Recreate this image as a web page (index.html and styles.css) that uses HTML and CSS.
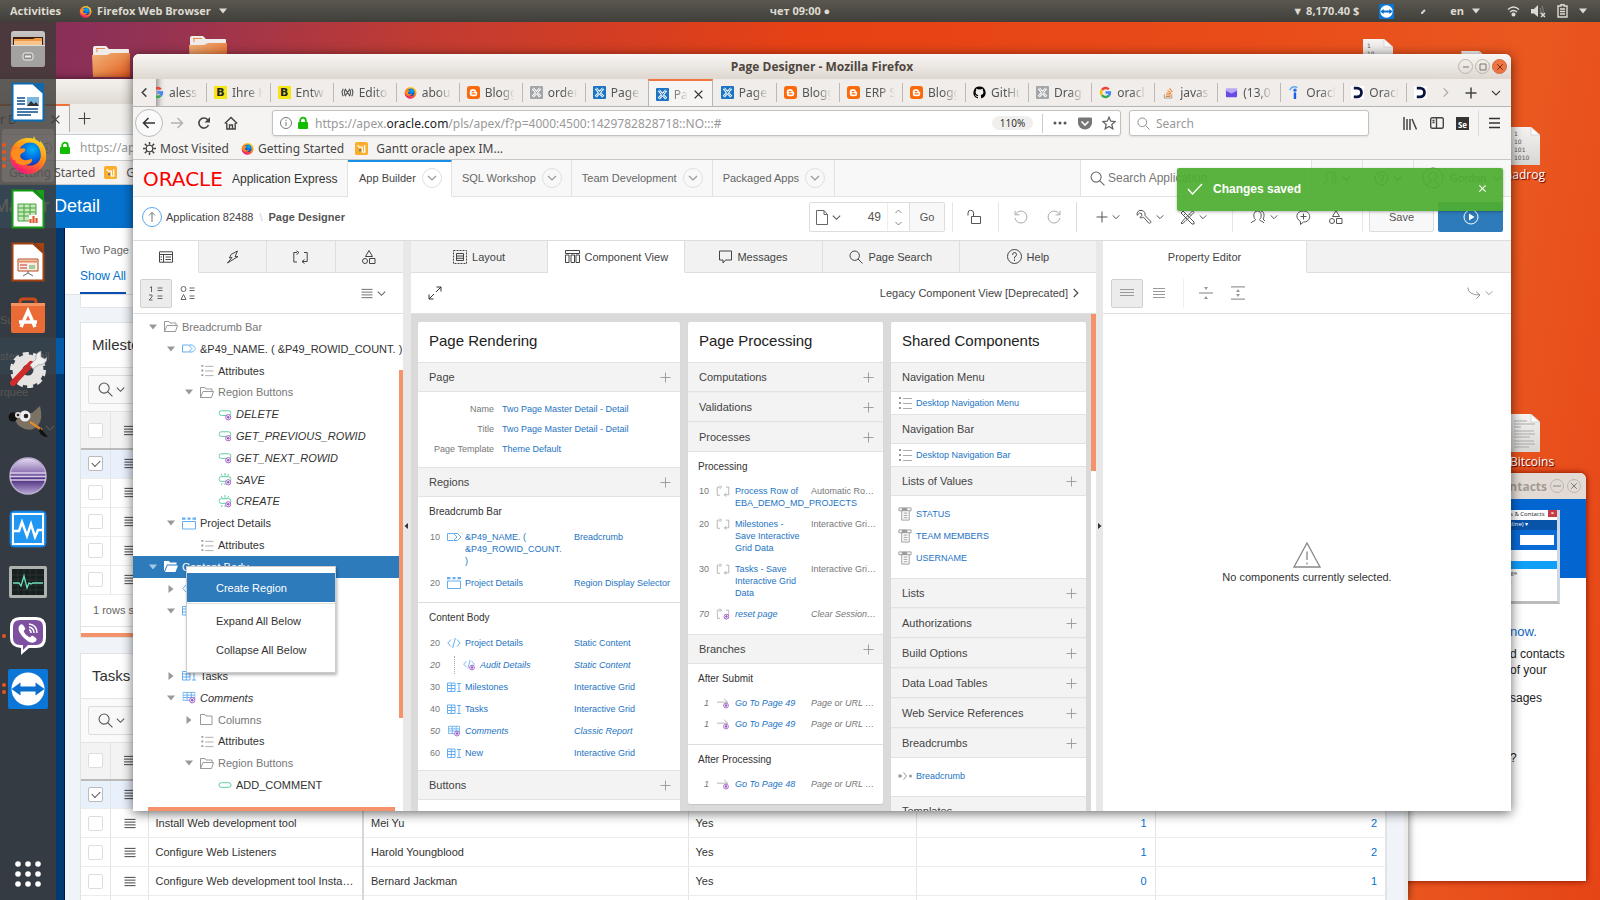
FILE: index.html
```html
<!DOCTYPE html>
<html lang="en">
<head>
<meta charset="utf-8">
<title>Page Designer - Mozilla Firefox</title>
<link rel="stylesheet" href="styles.css">
</head>
<body>
<svg class="defs" aria-hidden="true">
  <defs>
    <linearGradient id="gFire" x1="0.8" y1="0" x2="0.2" y2="1"><stop offset="0" stop-color="#ffe226"/><stop offset=".45" stop-color="#ff8a16"/><stop offset=".8" stop-color="#ff3750"/><stop offset="1" stop-color="#e31587"/></linearGradient>
    <radialGradient id="gGlobe" cx=".6" cy=".3" r=".8"><stop offset="0" stop-color="#00b3f4"/><stop offset=".6" stop-color="#0060df"/><stop offset="1" stop-color="#3a1b8f"/></radialGradient>
    <linearGradient id="gFolder" x1="0" y1="0" x2="1" y2="1"><stop offset="0" stop-color="#f0b27c"/><stop offset=".5" stop-color="#ea8a4c"/><stop offset="1" stop-color="#e0561d"/></linearGradient>
    <linearGradient id="gMetal" x1="0" y1="0" x2="0" y2="1"><stop offset="0" stop-color="#c9c8c6"/><stop offset="1" stop-color="#8b8a88"/></linearGradient>
    <linearGradient id="gPaper" x1="0" y1="0" x2="0" y2="1"><stop offset="0" stop-color="#f4f3f1"/><stop offset="1" stop-color="#d8d6d3"/></linearGradient>
    <linearGradient id="gEcl" x1="0" y1="0" x2="0" y2="1"><stop offset="0" stop-color="#e6dcf2"/><stop offset=".4" stop-color="#8e74b4"/><stop offset=".6" stop-color="#4b2f7c"/><stop offset="1" stop-color="#b9a6d8"/></linearGradient>
  </defs>
  <symbol id="firefox" viewBox="0 0 40 40"><circle cx="20" cy="21" r="18" fill="url(#gFire)"/><circle cx="22" cy="19" r="11.500" fill="url(#gGlobe)"/><path d="M3 17c2-3 5-4 8-3 2-1 5-1 6 0 1 3-2 3-4 5s0 5 3 6 5-1 8-1c1 3-3 6-8 6-8 0-13-6-13-13z" fill="#ff8d1c"/><path d="M26 1c-2 4 1 6 4 10s4 12 1 17-9 7-14 6-9-4-10-9L3 25c1 7 9 13 17 13s16-6 18-14c1-8-2-15-6-18 0 2 0 3 1 5-3-3-6-6-7-10z" fill="url(#gFire)"/></symbol>
  <symbol id="tv" viewBox="0 0 40 40"><rect width="40" height="40" rx="2" fill="#0a76d8"/><circle cx="20" cy="20" r="16.500" fill="#fff"/><path d="M3.500 20l9-6.500v4h15v-4l9 6.500-9 6.500v-4h-15v4z" fill="#0b6fd0"/></symbol>
  <symbol id="folderbig" viewBox="0 0 38 31"><path d="M1 2q0-2 2-2h11l3 3h19q1 0 1 1v7H1z" fill="#efecea"/><path d="M4 2.500h9M5 3v3" stroke="#e58a4d" fill="none"/><path d="M0 9h15l4-2h19v24H1z" fill="url(#gFolder)"/></symbol>
  <symbol id="file" viewBox="0 0 30 38"><path d="M0 0h21l9 8v30H0z" fill="url(#gPaper)"/><path d="M21 0v8h9z" fill="#fbfbfa" stroke="#bbb" stroke-width=".5"/></symbol>
  <symbol id="blogger" viewBox="0 0 14 14"><rect width="14" height="14" rx="3" fill="#fb6a0a"/><path d="M5.500 3.500h2a2 2 0 0 1 2 2c0 1 1.500.5 1.500 1.500v1.500a2.500 2.500 0 0 1-2.500 2.500h-3A2.500 2.500 0 0 1 3 8.500V6a2.500 2.500 0 0 1 2.500-2.500z" fill="#fff"/><path d="M5.500 6h2M5.500 8.500h3.200" stroke="#fb6a0a" stroke-width="1.200" stroke-linecap="round"/></symbol>
  <symbol id="xb" viewBox="0 0 14 14"><rect width="14" height="14" rx="1" fill="currentColor"/><path d="M3 2.500l8 9M11 2.500l-8 9" stroke="#fff" stroke-width="3"/><path d="M3 2.500l8 9M11 2.500l-8 9" stroke="currentColor" stroke-width="1.200" stroke-dasharray="1.200 .8"/></symbol>
  <symbol id="goog" viewBox="0 0 14 14" fill="none" stroke-width="2.600"><path d="M3.200 4.200A4.800 4.800 0 0 1 10.600 3.500" stroke="#ea4335"/><path d="M3.200 4.200a4.800 4.800 0 0 0 0 5.600" stroke="#fbbc05"/><path d="M3.200 9.800a4.800 4.800 0 0 0 7.300.6" stroke="#34a853"/><path d="M7 7h4.800a4.800 4.800 0 0 1-1.300 3.400" stroke="#4285f4"/></symbol>
  <symbol id="github" viewBox="0 0 16 16"><path d="M8 .6a7.500 7.500 0 0 0-2.400 14.600c.4.100.5-.2.500-.4v-1.400c-2.100.4-2.600-1-2.600-1-.3-.9-.8-1.100-.8-1.100-.7-.5 0-.5 0-.5.800.1 1.200.8 1.200.8.700 1.200 1.800.9 2.200.7 0-.5.300-.9.500-1-1.700-.3-3.400-.9-3.400-3.800 0-.8.300-1.500.8-2-.1-.3-.4-1 0-2 0 0 .6-.2 2.100.8a7 7 0 0 1 3.800 0c1.500-1 2.100-.8 2.100-.8.400 1 .1 1.700 0 2 .5.500.8 1.200.8 2 0 2.900-1.700 3.500-3.400 3.700.3.300.5.700.5 1.400v2.200c0 .2.100.5.500.4A7.500 7.500 0 0 0 8 .6z" fill="#000"/></symbol>
  <symbol id="stack" viewBox="0 0 14 14" fill="none"><path d="M2.500 9v4h8V9" stroke="#999"/><path d="M4 11.300h5M4.200 9.300l5 .6M4.800 7.200l4.700 1.500M6 4.700l4 3M8.200 2.500l3 4" stroke="#f48024" stroke-width="1.100"/></symbol>
  <symbol id="mail" viewBox="0 0 14 14"><path d="M1 3h12v8q0 1-1 1H2q-1 0-1-1z" fill="#6a4be8"/><path d="M1 3h12v2L7 8 1 5z" fill="#b9a8f7"/></symbol>
  <symbol id="person" viewBox="0 0 14 14"><circle cx="7.500" cy="4.500" r="1.800" fill="#1a73e8"/><path d="M2 4.500a5 5 0 0 1 8-2.500" stroke="#6aa5f0" stroke-width="1.600" fill="none"/><path d="M7.500 7v7" stroke="#1a5fe8" stroke-width="2.600" fill="none"/></symbol>
  <symbol id="dlogo" viewBox="0 0 14 14"><rect width="14" height="14" fill="#fff"/><path d="M3 2.200h3.500a4.700 4.700 0 0 1 0 9.600H3" fill="none" stroke="#0a1440" stroke-width="3"/></symbol>
  <symbol id="gantt" viewBox="0 0 14 14"><rect width="14" height="14" rx="2" fill="#fbad2c"/><path d="M3 3.500l1.500 2H8V11h2.500V3.500" fill="none" stroke="#fff" stroke-width="1.400"/><path d="M4.500 8h2v2h-2z" fill="#3a6ea5"/></symbol>
  <symbol id="ed" viewBox="0 0 14 14" fill="none" stroke="#555" stroke-width="1.200"><path d="M2.500 3Q0 7 2.500 11M5 3Q2.500 7 5 11M9 3q2.500 4 0 8M11.500 3q2.500 4 0 8M5 4l4 6M9 4l-4 6"/></symbol>
  <symbol id="chev" viewBox="0 0 12 12"><path d="M2 4l4 4 4-4" fill="none" stroke="currentColor" stroke-width="1.200"/></symbol>
  <symbol id="chevr" viewBox="0 0 12 12"><path d="M4 1.500L8.500 6 4 10.500" fill="none" stroke="currentColor" stroke-width="1.300"/></symbol>
  <symbol id="chevl" viewBox="0 0 12 12"><path d="M8 1.500L3.500 6 8 10.500" fill="none" stroke="currentColor" stroke-width="1.600"/></symbol>
  <symbol id="tri" viewBox="0 0 8 8"><path d="M0 1.500h8L4 6.500z" fill="currentColor"/></symbol>
  <symbol id="trir" viewBox="0 0 8 8"><path d="M1.500 0v8l5-4z" fill="currentColor"/></symbol>
  <symbol id="x" viewBox="0 0 10 10"><path d="M1.500 1.500l7 7M8.500 1.500l-7 7" stroke="currentColor" stroke-width="1.200"/></symbol>
  <symbol id="plus" viewBox="0 0 12 12"><path d="M6 .5v11M.5 6h11" stroke="currentColor" stroke-width="1"/></symbol>
  <symbol id="lock" viewBox="0 0 12 14"><path d="M3.200 6V4.500a2.800 2.800 0 0 1 5.600 0V6" fill="none" stroke="#12bc00" stroke-width="1.800"/><rect x="1" y="6" width="10" height="7" rx="1" fill="#12bc00"/></symbol>
  <symbol id="info" viewBox="0 0 14 14" fill="none" stroke="#777"><circle cx="7" cy="7" r="5.500"/><path d="M7 6v4M7 3.800v1.200"/></symbol>
  <symbol id="search" viewBox="0 0 14 14" fill="none" stroke="currentColor"><circle cx="5.700" cy="5.700" r="4.700"/><path d="M9 9l4.500 4.500"/></symbol>
  <symbol id="lines" viewBox="0 0 12 12"><path d="M0 1.500h12M0 4.500h12M0 7.500h12M0 10.500h12" stroke="currentColor"/></symbol>
  <symbol id="folder" viewBox="0 0 14 12" fill="none" stroke="currentColor"><path d="M.5 11V1h4.500l1 1.500h6V11z"/></symbol>
  <symbol id="ofolder" viewBox="0 0 14 12" fill="none" stroke="currentColor"><path d="M.5 11V1h4.500l1 1.500h6v2.500M.5 11L3 5h10.500L11.500 11z"/></symbol>
  <symbol id="wfolder" viewBox="0 0 14 12" fill="currentColor"><path d="M0 11V.5h5l1 1.500h6.500v2H3z"/><path d="M3.500 5H14l-2.500 6.500H1z"/></symbol>
  <symbol id="attrs" viewBox="0 0 14 14"><path d="M1 2h2M1 7h2M1 12h2" stroke="#999" stroke-width="2"/><path d="M5 2.500h9M5 7.500h9M5 12.500h9" stroke="#aaa"/></symbol>
  <symbol id="crumb" viewBox="0 0 14 10" fill="none" stroke="#64aef0"><path d="M.5 1.500h6L10 5 6.500 8.500h-6z M7 1.500h3.500L14 5l-3.500 3.500H7"/></symbol>
  <symbol id="btn" viewBox="0 0 14 14" fill="none"><rect x=".5" y="4" width="13" height="5" rx="2.500" stroke="#52c99a"/></symbol>
  <symbol id="badge" viewBox="0 0 14 14" fill="none"><circle cx="10.500" cy="10" r="2.800" fill="#fff" stroke="#9b59c0"/><circle cx="10.500" cy="10" r="1.400" fill="#9b59c0"/></symbol>
  <symbol id="btnb" viewBox="0 0 14 14"><use href="#btn" width="14" height="14" y="-1"/><use href="#badge" width="14" height="14"/></symbol>
  <symbol id="btns" viewBox="0 0 14 14"><path d="M7 0v3M3 1l1 2M11 1l-1 2M3 13l1-2M7 13v-2" stroke="#52c99a"/><use href="#btn" width="14" height="14"/><use href="#badge" width="14" height="14"/></symbol>
  <symbol id="region" viewBox="0 0 14 12" fill="none" stroke="#64aef0"><path d="M.5 4h13v7.500H.5z"/><path d="M0 1.200h3.500M5.500 1.200H8.500M10.500 1.200H14" stroke-width="2.200"/></symbol>
  <symbol id="code" viewBox="0 0 14 12" fill="none" stroke="#64aef0"><path d="M4 2.500L.8 6 4 9.500M10 2.500L13.200 6 10 9.500M8.300 1L5.700 11"/></symbol>
  <symbol id="codeb" viewBox="0 0 14 14"><use href="#code" width="14" height="12"/><use href="#badge" width="14" height="14"/></symbol>
  <symbol id="grid" viewBox="0 0 14 12" fill="none" stroke="#64aef0"><path d="M.5 2h7.500v8.500H.5zM.5 4.500H8M.5 7.500H8M4.300 2v8.500M10 2.500h4M10 10.500h4M12 2.500v8"/></symbol>
  <symbol id="rep" viewBox="0 0 14 12" fill="none" stroke="#64aef0"><path d="M.5 1.500h13V10H.5zM.5 4.500h13M.5 7h13M5 1.500V10M9.500 1.500V10"/></symbol>
  <symbol id="repb" viewBox="0 0 14 14"><use href="#rep" width="14" height="12"/><use href="#badge" width="14" height="14"/></symbol>
  <symbol id="proc" viewBox="0 0 15 14" fill="none" stroke="currentColor"><path d="M4 2.500H.8V12H4M3.500.8L6 2.500 3.500 4.500M11 2.500h3.200V11.500H9M11.500 9.500L9 11.500l2.500 2"/></symbol>
  <symbol id="procb" viewBox="0 0 15 14"><use href="#proc" width="15" height="14"/><use href="#badge" width="14" height="14" x="1"/></symbol>
  <symbol id="branch" viewBox="0 0 14 14"><path d="M0 6h12M8 2l4.500 4L8 9.500" fill="none" stroke="#aaa"/><use href="#badge" width="14" height="14"/></symbol>
  <symbol id="lov" viewBox="0 0 14 15" fill="none" stroke="#999"><path d="M.5 1h13v3H.5zM3.500 4v10h8V4M5.500 6.500h4M5.500 9h4M5.500 11.500h4"/><path d="M4 1.500h5v2H4z" fill="#999"/></symbol>
  <symbol id="dots" viewBox="0 0 14 10"><circle cx="2" cy="5" r="1.800" fill="#999"/><circle cx="12.500" cy="5" r="1.500" fill="#999"/><path d="M5.500 1.500L8.500 5l-3 3.500" fill="none" stroke="#999"/></symbol>
  <symbol id="shapes" viewBox="0 0 16 16" fill="none" stroke="currentColor"><path d="M8 1.500l3.500 6h-7zM8.500 9.500H14v5H8.500z"/><circle cx="4" cy="12" r="2.500"/></symbol>
  <symbol id="user" viewBox="0 0 16 16" fill="none" stroke="currentColor"><path d="M5.500 10.500C3 9 3 2 7.500 2S12 9 9.500 10.500c0 2 4 1.500 4.500 3.500M5.500 10.500c0 2-4 1.500-4.500 3.500M11 2.200c3-.5 4 5 2 7.800l2 2"/></symbol>
  <symbol id="tree" viewBox="0 0 14 12" fill="none" stroke="currentColor"><path d="M.5.800h13v10.400H.5zM.5 3.500h13M4.500 3.500v7.700M6.500 6H12M6.500 8.500H12M1.500 6H3M1.500 8.500H3"/></symbol>
  <symbol id="bolt" viewBox="0 0 14 14" fill="none" stroke="currentColor"><path d="M11.500 1L5 4.500 3.500 8l2.500-.5L1.500 13 12 6.500l-3 .3z"/></symbol>
</svg>

<div class="desktop">
  <div class="pin folder1"><svg width="38" height="31"><use href="#folderbig"/></svg></div>
  <div class="pin folder2"><svg width="38" height="31"><use href="#folderbig"/></svg></div>
  <div class="pin file1"><svg width="30" height="38"><use href="#file"/></svg><span class="bits">1<br>10</span></div>
  <div class="pin file2"><svg width="26" height="32"><use href="#file"/></svg></div>
  <div class="pin file3"><svg width="30" height="38"><use href="#file"/></svg><span class="bits">1<br>10<br>101<br>1010</span><span class="lbl">nadrog</span></div>
  <div class="pin file4"><svg width="30" height="38" viewBox="0 0 30 38"><use href="#file"/><path d="M4 7h13M4 10h21M4 13h7M4 17h20M4 20h21M4 23h16M4 27h20M4 30h21M4 33h15" stroke="#aaa"/></svg><span class="lbl">Bitcoins</span></div>

  <section class="teamwin">
    <header><span>ontacts</span><i><svg width="8" height="8" viewBox="0 0 8 8"><path d="M0 4h8" stroke="#888"/></svg></i><i><svg width="8" height="8"><use href="#x"/></svg></i></header>
    <div class="team-hero">
      <div class="team-shot">
        <div class="ts-title">ters &amp; Contacts<b>×</b></div>
        <div class="ts-bar">nline) ▾<em></em></div>
        <div class="ts-find"><span></span></div>
        <div class="ts-sel"></div>
        <p>rge</p><p>a</p><p>r</p>
      </div>
    </div>
    <div class="team-copy"><p class="now">now.</p><p>d contacts<br>of your</p><p>sages</p><p class="q">?</p></div>
  </section>

  <section class="backwin">
    <div class="bw-title"></div>
    <div class="bw-tabs"><span class="bw-tab">r D<svg width="11" height="11"><use href="#x"/></svg></span><svg width="13" height="13"><use href="#plus"/></svg></div>
    <div class="bw-url"><svg width="12" height="12"><use href="#info"/></svg><svg width="12" height="14"><use href="#lock"/></svg><span>https://apex.oracle.com</span></div>
    <div class="bw-marks"><span>Getting Started</span><svg width="13" height="13"><use href="#gantt"/></svg><span>Gantt oracle</span></div>
    <div class="bw-head">Master Detail</div>
    <div class="bw-body">
      <nav class="bw-side"><a href="#">Su</a><a href="#" class="on">ster Detail</a><a href="#">rquee</a><a href="#" class="ch"><svg width="12" height="12"><use href="#chev"/></svg></a></nav>
      <div class="bw-main">
        <div class="bw-crumb"><span>Two Page</span><a href="#">Show All</a></div>
        <div class="bw-strip"></div>
        <div class="ig">
          <h2>Milestones</h2>
          <div class="ig-tools"><button class="ig-find" aria-label="Search milestones"><svg width="15" height="15"><use href="#search"/></svg><svg width="11" height="11"><use href="#chev"/></svg></button></div>
          <table>
            <tr class="hd"><th><input type="checkbox" aria-label="All"></th><th><svg width="11" height="11"><use href="#lines"/></svg></th><th></th></tr>
            <tr class="sel"><td><input type="checkbox" checked aria-label="Row 1"></td><td><svg width="12" height="11"><use href="#lines"/></svg></td><td></td></tr>
            <tr><td><input type="checkbox" aria-label="Row 2"></td><td><svg width="12" height="11"><use href="#lines"/></svg></td><td></td></tr>
            <tr><td><input type="checkbox" aria-label="Row 3"></td><td><svg width="12" height="11"><use href="#lines"/></svg></td><td></td></tr>
            <tr><td><input type="checkbox" aria-label="Row 4"></td><td><svg width="12" height="11"><use href="#lines"/></svg></td><td></td></tr>
            <tr><td><input type="checkbox" aria-label="Row 5"></td><td><svg width="12" height="11"><use href="#lines"/></svg></td><td></td></tr>
          </table>
          <div class="ig-foot">1 rows selected</div>
          <div class="ig-bar"></div>
        </div>
        <div class="ig second">
          <h2>Tasks</h2>
          <div class="ig-tools"><button class="ig-find" aria-label="Search tasks"><svg width="15" height="15"><use href="#search"/></svg><svg width="11" height="11"><use href="#chev"/></svg></button></div>
          <table>
            <tr class="hd"><th><input type="checkbox" aria-label="All"></th><th><svg width="11" height="11"><use href="#lines"/></svg></th><th class="c3"></th><th class="c4"></th><th class="c5"></th><th class="c6"></th><th class="c7"></th></tr>
            <tr class="sel"><td><input type="checkbox" checked aria-label="Task 1"></td><td><svg width="12" height="11"><use href="#lines"/></svg></td><td></td><td></td><td></td><td></td><td></td></tr>
            <tr><td><input type="checkbox" aria-label="Task 2"></td><td><svg width="12" height="11"><use href="#lines"/></svg></td><td>Install Web development tool</td><td>Mei Yu</td><td>Yes</td><td class="n">1</td><td class="n">2</td></tr>
            <tr><td><input type="checkbox" aria-label="Task 3"></td><td><svg width="12" height="11"><use href="#lines"/></svg></td><td>Configure Web Listeners</td><td>Harold Youngblood</td><td>Yes</td><td class="n">1</td><td class="n">2</td></tr>
            <tr><td><input type="checkbox" aria-label="Task 4"></td><td><svg width="12" height="11"><use href="#lines"/></svg></td><td>Configure Web development tool Insta…</td><td>Bernard Jackman</td><td>Yes</td><td class="n">0</td><td class="n">1</td></tr>
            <tr><td></td><td></td><td></td><td></td><td></td><td></td><td></td></tr>
          </table>
        </div>
      </div>
    </div>
  </section>

  <section class="mainwin">
    <header class="titlebar"><h1>Page Designer - Mozilla Firefox</h1>
      <div class="wbtns"><button aria-label="Minimize"><svg width="8" height="8" viewBox="0 0 8 8"><path d="M1 4h6" stroke="currentColor"/></svg></button><button aria-label="Maximize"><svg width="8" height="8" viewBox="0 0 8 8"><path d="M1 1h6v6H1z" fill="none" stroke="currentColor"/></svg></button><button class="close" aria-label="Close"><svg width="8" height="8"><use href="#x"/></svg></button></div></header>
    <div class="tabbar">
      <button class="tscroll" aria-label="Scroll left"><svg width="11" height="11"><use href="#chevl"/></svg></button>
      <div class="tabs">
        <a href="#"><svg><use href="#goog"/></svg><span>aless</span></a>
        <a href="#"><b class="fb">B</b><span>Ihre K</span></a>
        <a href="#"><b class="fb">B</b><span>Entw</span></a>
        <a href="#"><svg><use href="#ed"/></svg><span>Edito</span></a>
        <a href="#"><svg><use href="#firefox"/></svg><span>abou</span></a>
        <a href="#"><svg><use href="#blogger"/></svg><span>Blogg</span></a>
        <a href="#"><svg class="gr"><use href="#xb"/></svg><span>order</span></a>
        <a href="#"><svg class="bl"><use href="#xb"/></svg><span>Page</span></a>
        <a href="#" class="on"><svg class="bl"><use href="#xb"/></svg><span>Pa</span><svg class="cx"><use href="#x"/></svg></a>
        <a href="#"><svg class="bl"><use href="#xb"/></svg><span>Page</span></a>
        <a href="#"><svg><use href="#blogger"/></svg><span>Blogg</span></a>
        <a href="#"><svg><use href="#blogger"/></svg><span>ERP S</span></a>
        <a href="#"><svg><use href="#blogger"/></svg><span>Blogg</span></a>
        <a href="#"><svg><use href="#github"/></svg><span>GitHu</span></a>
        <a href="#"><svg class="gr"><use href="#xb"/></svg><span>Drag</span></a>
        <a href="#"><svg><use href="#goog"/></svg><span>oracl</span></a>
        <a href="#"><svg><use href="#stack"/></svg><span>javas</span></a>
        <a href="#"><svg><use href="#mail"/></svg><span>(13,0</span></a>
        <a href="#"><svg><use href="#person"/></svg><span>Oracl</span></a>
        <a href="#"><svg><use href="#dlogo"/></svg><span>Oracl</span></a>
        <a href="#"><svg><use href="#dlogo"/></svg></a>
      </div>
      <div class="tabend"><button aria-label="Scroll right" class="dim"><svg width="11" height="11"><use href="#chevr"/></svg></button><button aria-label="New tab"><svg width="12" height="12" viewBox="0 0 12 12"><path d="M6 .5v11M.5 6h11" stroke="currentColor" stroke-width="1.500"/></svg></button><button aria-label="All tabs"><svg width="12" height="12"><use href="#chev"/></svg></button></div>
    </div>
    <div class="navbar">
      <button class="back" aria-label="Back"><svg width="14" height="14" viewBox="0 0 14 14"><path d="M13 7H1.500M6.500 2L1.500 7l5 5" fill="none" stroke="#333" stroke-width="1.500"/></svg></button>
      <button aria-label="Forward"><svg width="14" height="14" viewBox="0 0 14 14"><path d="M1 7h11.500M7.500 2l5 5-5 5" fill="none" stroke="#b4b2b0" stroke-width="1.500"/></svg></button>
      <button aria-label="Reload"><svg width="14" height="14" viewBox="0 0 14 14"><path d="M11.500 9A5 5 0 1 1 10.500 3.500L12.500 5.500" fill="none" stroke="#444" stroke-width="1.600"/><path d="M13 1v5.500H7.500z" fill="#444"/></svg></button>
      <button aria-label="Home"><svg width="14" height="14" viewBox="0 0 14 14"><path d="M.8 7.500L7 1.500l6.200 6M2.800 7v6h8.400V7M5.500 13V9h3v4" fill="none" stroke="#444" stroke-width="1.400"/></svg></button>
      <div class="urlbox">
        <svg width="14" height="14"><use href="#info"/></svg><svg width="12" height="14"><use href="#lock"/></svg>
        <a class="url" href="#">https://apex.<b>oracle.com</b>/pls/apex/f?p=4000:4500:1429782828718::NO:::#</a>
        <button class="zoom">110%</button>
        <button class="dots" aria-label="Page actions"><svg width="14" height="14" viewBox="0 0 14 14" fill="#555"><circle cx="2" cy="7" r="1.500"/><circle cx="7" cy="7" r="1.500"/><circle cx="12" cy="7" r="1.500"/></svg></button>
        <button class="ub" aria-label="Pocket"><svg width="14" height="13" viewBox="0 0 14 13"><path d="M0 1.500Q0 .5 1 .5h12q1 0 1 1V6a7 6.500 0 0 1-14 0z" fill="#777"/><path d="M3.500 4.500L7 8l3.500-3.500" fill="none" stroke="#fff" stroke-width="1.600"/></svg></button>
        <button class="ub" aria-label="Bookmark"><svg width="14" height="14" viewBox="0 0 14 14"><path d="M7 1.200l1.800 4 4.300.4-3.300 2.900 1 4.300L7 10.500l-3.800 2.300 1-4.300L.9 5.600l4.300-.4z" fill="none" stroke="#666" stroke-width="1.300"/></svg></button>
      </div>
      <label class="searchbox"><svg width="13" height="13"><use href="#search"/></svg><input type="text" placeholder="Search" aria-label="Search"></label>
      <div class="nright">
        <button aria-label="Library"><svg width="14" height="13" viewBox="0 0 14 13"><path d="M1 0v13M4 2v11M7 2v11M9 2l4.500 10.500" stroke="#444" stroke-width="1.500"/></svg></button>
        <button aria-label="Sidebar"><svg width="14" height="12" viewBox="0 0 14 12" fill="none" stroke="#444" stroke-width="1.400"><rect x=".7" y=".7" width="12.600" height="10.600" rx="1.500"/><path d="M6.500 1v10M2.500 3.500H4.500M2.500 5.500H4.500"/></svg></button>
        <button class="se" aria-label="Selenium">Se</button>
        <button class="menu" aria-label="Menu"><svg width="12" height="12" viewBox="0 0 12 12"><path d="M0 1.500h11M0 6h11M0 10.500h11" stroke="#333" stroke-width="1.400"/></svg></button>
      </div>
    </div>
    <nav class="marks">
      <a href="#"><svg width="13" height="13" viewBox="0 0 14 14" fill="none" stroke="#444"><circle cx="7" cy="7" r="3.500" stroke-width="1.300"/><path d="M7 0v3M7 11v3M0 7h3M11 7h3M2 2l2 2M10 10l2 2M12 2l-2 2M4 10l-2 2" stroke-width="1.600"/></svg>Most Visited</a>
      <a href="#" class="m2"><svg width="13" height="13"><use href="#firefox"/></svg>Getting Started</a>
      <a href="#" class="m3"><svg width="13" height="13"><use href="#gantt"/></svg>Gantt oracle apex IM…</a>
    </nav>

    <div class="apex">
      <div class="ahead">
        <div class="brand"><span class="ora">ORACLE</span><span>Application Express</span></div>
        <a href="#" class="at on">App Builder<i><svg width="12" height="12"><use href="#chev"/></svg></i></a>
        <a href="#" class="at">SQL Workshop<i><svg width="12" height="12"><use href="#chev"/></svg></i></a>
        <a href="#" class="at">Team Development<i><svg width="12" height="12"><use href="#chev"/></svg></i></a>
        <a href="#" class="at">Packaged Apps<i><svg width="12" height="12"><use href="#chev"/></svg></i></a>
        <span class="fill"></span>
        <label class="asearch"><svg width="15" height="15"><use href="#search"/></svg><input type="text" placeholder="Search Application" aria-label="Search Application"></label>
        <span class="acct a1"><svg width="16" height="16"><use href="#user"/></svg><svg width="11" height="11"><use href="#chev"/></svg></span>
        <span class="acct a1"><svg width="15" height="15" viewBox="0 0 15 15" fill="none" stroke="currentColor"><circle cx="7.500" cy="7.500" r="6.500"/><path d="M5.500 6q0-2 2-2t2 2-2 2v1.500M7.500 10.500v1"/></svg><svg width="11" height="11"><use href="#chev"/></svg></span>
        <span class="acct a2"><svg width="22" height="22" viewBox="0 0 22 22" fill="none" stroke="currentColor"><circle cx="11" cy="11" r="10"/><path d="M11 5c-5 0-4 8-1.500 9 0 2-4 1.500-5 4M11 5c5 0 4 8 1.500 9 0 2 4 1.500 5 4"/></svg>Gordan<svg width="11" height="11"><use href="#chev"/></svg></span>
      </div>
      <div class="abar">
        <a href="#" class="up" aria-label="Up"><svg width="12" height="12" viewBox="0 0 12 12"><path d="M6 11V1.500M3 4.500l3-3 3 3" fill="none" stroke="#777"/></svg></a>
        <a href="#" class="crumbs">Application 82488</a><span class="slash">\</span><b>Page Designer</b>
        <div class="pagebox"><button aria-label="Pages"><svg width="12" height="15" viewBox="0 0 12 15"><path d="M.5.500h7.500l3.500 4v10H.5zM8 .5v4h3.500" fill="none" stroke="#666"/></svg><svg width="11" height="11"><use href="#chev"/></svg></button><input type="text" value="49" aria-label="Page number"><span class="spin"><svg width="9" height="9" viewBox="0 0 12 12"><path d="M2 8l4-4 4 4" fill="none" stroke="currentColor" stroke-width="1.200"/></svg><svg width="9" height="9"><use href="#chev"/></svg></span><button class="go">Go</button></div>
        <div class="tg g1"><button aria-label="Unlocked"><svg width="14" height="14" viewBox="0 0 14 14" fill="none" stroke="currentColor"><path d="M4.500 6.500h9v7h-9zM6.500 6.500V3a2.500 2.500 0 0 0-5.500 0v2.500"/></svg></button></div>
        <div class="tg g2 dim"><button aria-label="Undo"><svg width="14" height="14" viewBox="0 0 14 14" fill="none" stroke="currentColor"><path d="M1 .8v4h4.500M1.500 4.500A6 6 0 1 1 1 8"/></svg></button><button aria-label="Redo"><svg width="14" height="14" viewBox="0 0 14 14" fill="none" stroke="currentColor"><path d="M13 .8v4H8.500M12.500 4.500A6 6 0 1 0 13 8"/></svg></button></div>
        <div class="tg g3"><button aria-label="Create"><svg width="12" height="12"><use href="#plus"/></svg><svg width="10" height="10"><use href="#chev"/></svg></button><button aria-label="Utilities"><svg width="16" height="16" viewBox="0 0 16 16" fill="none" stroke="currentColor"><path d="M6 1.500a3.800 3.800 0 0 0-4.800 4.800L3.500 4l2 .5.500 2L3.800 8.500c1.200.6 2.700.4 3.800-.3l5 5.800c1 1 3-.5 2-1.800L9 6.500C9.500 4 8.200 2 6 1.500z"/></svg><svg width="10" height="10"><use href="#chev"/></svg></button><button aria-label="Settings"><svg width="15" height="15" viewBox="0 0 15 15" fill="none" stroke="currentColor"><path d="M1 3l2-2 11 11v2h-2zM3.500 5.500l2-2M12.500 1l1.500 1.500-9 9L2 14l-1-1 2.500-3zM9.500 4l1.500 1.500"/></svg><svg width="10" height="10"><use href="#chev"/></svg></button></div>
        <div class="tg g4"><button aria-label="Team"><svg width="16" height="16"><use href="#user"/></svg><svg width="10" height="10"><use href="#chev"/></svg></button><button aria-label="Comment"><svg width="15" height="15" viewBox="0 0 15 15" fill="none" stroke="currentColor"><path d="M4.500 11.500v3l3-2.500c8 .5 8.500-11 0-11S-.5 9 4.500 11.500zM7.500 3.500v6M4.500 6.500h6"/></svg></button><button aria-label="Shared components"><svg width="16" height="16"><use href="#shapes"/></svg></button></div>
        <button class="save">Save</button><button class="run" aria-label="Save and run"><svg width="16" height="16" viewBox="0 0 16 16"><circle cx="8" cy="8" r="7" fill="none" stroke="#fff"/><path d="M6 4.500v7L11.500 8z" fill="#fff"/></svg></button>
      </div>

      <div class="panes">
        <aside class="left">
          <div class="ptabs lt"><button class="on" aria-label="Rendering"><svg width="14" height="12"><use href="#tree"/></svg></button><button aria-label="Dynamic actions"><svg width="14" height="14"><use href="#bolt"/></svg></button><button aria-label="Processing"><svg width="15" height="14"><use href="#proc"/></svg></button><button aria-label="Shared"><svg width="16" height="16"><use href="#shapes"/></svg></button></div>
          <div class="ptools lt2"><button class="sq on" aria-label="By order"><svg width="16" height="16" viewBox="0 0 16 16" fill="none" stroke="currentColor"><path d="M2 3l1.500-1.500V7M1 10h3v2L1 15h3.500M9.500 3h5M9.500 5.500h5M9.500 11h5M9.500 13.500h5"/></svg></button><button class="sq" aria-label="By type"><svg width="16" height="16" viewBox="0 0 16 16" fill="none" stroke="currentColor"><circle cx="3.500" cy="4" r="2.500"/><path d="M3.500 9.500L6 14.500H1zM9.500 3h5M9.500 5.500h5M9.500 11h5M9.500 13.500h5"/></svg></button><button class="lm" aria-label="Menu"><svg width="12" height="11"><use href="#lines"/></svg><svg width="11" height="11"><use href="#chev"/></svg></button></div>
          <div class="treewrap">
            <ul class="tree">
              <li class="l1 g"><svg><use href="#tri"/></svg><svg><use href="#ofolder"/></svg>Breadcrumb Bar</li>
              <li class="l2"><svg><use href="#tri"/></svg><svg><use href="#crumb"/></svg>&amp;P49_NAME. ( &amp;P49_ROWID_COUNT. )</li>
              <li class="l3"><svg></svg><svg><use href="#attrs"/></svg>Attributes</li>
              <li class="l3 g"><svg><use href="#tri"/></svg><svg><use href="#ofolder"/></svg>Region Buttons</li>
              <li class="l4 i"><svg></svg><svg><use href="#btnb"/></svg>DELETE</li>
              <li class="l4 i"><svg></svg><svg><use href="#btnb"/></svg>GET_PREVIOUS_ROWID</li>
              <li class="l4 i"><svg></svg><svg><use href="#btnb"/></svg>GET_NEXT_ROWID</li>
              <li class="l4 i"><svg></svg><svg><use href="#btns"/></svg>SAVE</li>
              <li class="l4 i"><svg></svg><svg><use href="#btns"/></svg>CREATE</li>
              <li class="l2"><svg><use href="#tri"/></svg><svg><use href="#region"/></svg>Project Details</li>
              <li class="l3"><svg></svg><svg><use href="#attrs"/></svg>Attributes</li>
              <li class="l1 cur"><svg><use href="#tri"/></svg><svg><use href="#wfolder"/></svg>Content Body</li>
              <li class="l2"><svg><use href="#trir"/></svg><svg><use href="#code"/></svg></li>
              <li class="l2"><svg><use href="#tri"/></svg><svg><use href="#grid"/></svg></li>
              <li></li>
              <li></li>
              <li class="l2"><svg><use href="#trir"/></svg><svg><use href="#grid"/></svg>Tasks</li>
              <li class="l2 i"><svg><use href="#tri"/></svg><svg><use href="#repb"/></svg>Comments</li>
              <li class="l3 g"><svg><use href="#trir"/></svg><svg><use href="#folder"/></svg>Columns</li>
              <li class="l3"><svg></svg><svg><use href="#attrs"/></svg>Attributes</li>
              <li class="l3 g"><svg><use href="#tri"/></svg><svg><use href="#ofolder"/></svg>Region Buttons</li>
              <li class="l4"><svg></svg><svg><use href="#btn"/></svg>ADD_COMMENT</li>
            </ul>
            <span class="vbar"></span><span class="hbar"></span>
            <div class="ctx" role="menu"><button class="on">Create Region</button><hr><button>Expand All Below</button><button>Collapse All Below</button></div>
          </div>
        </aside>
        <div class="gut"><svg width="7" height="8" viewBox="0 0 7 8"><path d="M5 1v6L1.500 4z" fill="#333"/></svg></div>
        <main class="mid">
          <div class="ptabs"><button><svg width="14" height="14" viewBox="0 0 14 14" fill="none" stroke="currentColor"><path d="M.5.500h13v13H.5z" stroke-dasharray="2 1"/><path d="M3.500 3.500h7v7h-7zM3.500 6h7M3.500 8.300h7"/></svg>Layout</button><button class="on"><svg width="15" height="13" viewBox="0 0 15 13" fill="none" stroke="currentColor"><path d="M.5.500h14v3H.5zM.5 5h3.500v7.500H.5zM6 5h3.500v7.500H6zM11 5h3.500v7.500H11z"/></svg>Component View</button><button><svg width="13" height="14" viewBox="0 0 13 14" fill="none" stroke="currentColor"><path d="M.5 1h12v9H6.500L4 13v-3H.5z"/></svg>Messages</button><button><svg width="14" height="14"><use href="#search"/></svg>Page Search</button><button><svg width="15" height="15" viewBox="0 0 15 15" fill="none" stroke="currentColor"><circle cx="7.500" cy="7.500" r="7"/><path d="M5.500 6q0-2.500 2-2.500t2 2-2 2.500v1.500M7.500 10.500v1.500"/></svg>Help</button></div>
          <div class="ptools mt"><button aria-label="Expand"><svg width="14" height="14" viewBox="0 0 14 14" fill="none" stroke="#333"><path d="M8 6l5-5M8.500 1H13v4.500M6 8l-5 5M1 8.500V13h4.500"/></svg></button><a href="#">Legacy Component View [Deprecated]<svg width="11" height="12"><use href="#chevr"/></svg></a></div>
          <div class="cards">
            <article class="card r">
              <h2>Page Rendering</h2>
              <h3>Page<svg><use href="#plus"/></svg></h3>
              <dl><dt>Name</dt><dd><a href="#">Two Page Master Detail - Detail</a></dd><dt>Title</dt><dd><a href="#">Two Page Master Detail - Detail</a></dd><dt>Page Template</dt><dd><a href="#">Theme Default</a></dd></dl>
              <h3>Regions<svg><use href="#plus"/></svg></h3>
              <div class="grp"><h4>Breadcrumb Bar</h4>
                <div class="ln"><span>10</span><svg><use href="#crumb"/></svg><a href="#">&amp;P49_NAME. (<br>&amp;P49_ROWID_COUNT.<br>)</a><a href="#">Breadcrumb</a></div>
                <div class="ln"><span>20</span><svg><use href="#region"/></svg><a href="#">Project Details</a><a href="#" class="nw">Region Display Selector</a></div></div>
              <div class="grp last"><h4>Content Body</h4>
                <div class="ln"><span>20</span><svg><use href="#code"/></svg><a href="#">Project Details</a><a href="#">Static Content</a></div>
                <div class="ln i sub"><span>20</span><em></em><a href="#"><svg><use href="#codeb"/></svg>Audit Details</a><a href="#">Static Content</a></div>
                <div class="ln"><span>30</span><svg><use href="#grid"/></svg><a href="#">Milestones</a><a href="#">Interactive Grid</a></div>
                <div class="ln"><span>40</span><svg><use href="#grid"/></svg><a href="#">Tasks</a><a href="#">Interactive Grid</a></div>
                <div class="ln i"><span>50</span><svg><use href="#repb"/></svg><a href="#">Comments</a><a href="#">Classic Report</a></div>
                <div class="ln"><span>60</span><svg><use href="#grid"/></svg><a href="#">New</a><a href="#">Interactive Grid</a></div></div>
              <h3>Buttons<svg><use href="#plus"/></svg></h3>
            </article>
            <article class="card p">
              <h2>Page Processing</h2>
              <h3>Computations<svg><use href="#plus"/></svg></h3><h3>Validations<svg><use href="#plus"/></svg></h3><h3>Processes<svg><use href="#plus"/></svg></h3>
              <div class="grp last"><h4>Processing</h4>
                <div class="ln"><span>10</span><svg><use href="#proc"/></svg><a href="#">Process Row of EBA_DEMO_MD_PROJECTS</a><span>Automatic Ro…</span></div>
                <div class="ln"><span>20</span><svg><use href="#proc"/></svg><a href="#">Milestones -<br>Save Interactive<br>Grid Data</a><span>Interactive Gri…</span></div>
                <div class="ln"><span>30</span><svg><use href="#proc"/></svg><a href="#">Tasks - Save<br>Interactive Grid<br>Data</a><span>Interactive Gri…</span></div>
                <div class="ln i"><span>70</span><svg><use href="#procb"/></svg><a href="#">reset page</a><span>Clear Session…</span></div></div>
              <h3>Branches<svg><use href="#plus"/></svg></h3>
              <div class="grp"><h4>After Submit</h4>
                <div class="ln i one"><span>1</span><svg><use href="#branch"/></svg><a href="#">Go To Page 49</a><span>Page or URL …</span></div>
                <div class="ln i one"><span>1</span><svg><use href="#branch"/></svg><a href="#">Go To Page 49</a><span>Page or URL …</span></div></div>
              <div class="grp last"><h4>After Processing</h4>
                <div class="ln i one"><span>1</span><svg><use href="#branch"/></svg><a href="#">Go To Page 48</a><span>Page or URL …</span></div></div>
            </article>
            <article class="card s">
              <h2>Shared Components</h2>
              <h3>Navigation Menu</h3>
              <div class="sl"><a href="#"><svg><use href="#attrs"/></svg>Desktop Navigation Menu</a></div>
              <h3>Navigation Bar</h3>
              <div class="sl"><a href="#"><svg><use href="#attrs"/></svg>Desktop Navigation Bar</a></div>
              <h3>Lists of Values<svg><use href="#plus"/></svg></h3>
              <div class="sl big"><a href="#"><svg><use href="#lov"/></svg>STATUS</a><a href="#"><svg><use href="#lov"/></svg>TEAM MEMBERS</a><a href="#"><svg><use href="#lov"/></svg>USERNAME</a></div>
              <h3>Lists<svg><use href="#plus"/></svg></h3><h3>Authorizations<svg><use href="#plus"/></svg></h3><h3>Build Options<svg><use href="#plus"/></svg></h3><h3>Data Load Tables<svg><use href="#plus"/></svg></h3><h3>Web Service References<svg><use href="#plus"/></svg></h3><h3>Breadcrumbs<svg><use href="#plus"/></svg></h3>
              <div class="sl big"><a href="#"><svg><use href="#dots"/></svg>Breadcrumb</a></div>
              <h3>Templates</h3>
            </article>
            <div class="track"><span></span></div>
          </div>
        </main>
        <div class="gut"><svg width="7" height="8" viewBox="0 0 7 8"><path d="M2 1v6L5.500 4z" fill="#333"/></svg></div>
        <aside class="right">
          <div class="ptabs rt"><button class="on">Property Editor</button><span></span></div>
          <div class="ptools rtools"><button class="sq on" aria-label="Common"><svg width="14" height="12" viewBox="0 0 14 12"><path d="M0 2.500h14M0 5.500h14M0 8.500h14" stroke="#999"/></svg></button><button class="sq" aria-label="All"><svg width="14" height="12"><use href="#lines"/></svg></button><i class="dv"></i><button class="sq" aria-label="Collapse"><svg width="14" height="14" viewBox="0 0 14 14"><path d="M0 7h14" stroke="#aaa" stroke-width="1.500"/><path d="M5 1h4L7 4zM5 13h4L7 10z" fill="#999"/></svg></button><button class="sq" aria-label="Expand"><svg width="14" height="14" viewBox="0 0 14 14"><path d="M0 .8h14M0 13.200h14" stroke="#999" stroke-width="1.200"/><path d="M5 6h4L7 3zM5 8h4L7 11z" fill="#999"/></svg></button><button class="go2" aria-label="Go to"><svg width="14" height="12" viewBox="0 0 14 12" fill="none" stroke="currentColor"><path d="M.8.500Q1 8 13 8M9 4.500L13 8 9.500 11.500"/></svg><svg width="10" height="10"><use href="#chev"/></svg></button></div>
          <div class="empty"><svg width="28" height="26" viewBox="0 0 28 26" fill="none" stroke="#888"><path d="M14 1l13 24H1z" stroke-width="1.300"/><path d="M14 9.500v8.500M14 20.500v2" stroke-width="1.300"/></svg><p>No components currently selected.</p></div>
        </aside>
      </div>
    </div>
    <div class="toast" role="status"><svg width="16" height="12" viewBox="0 0 16 12"><path d="M1 6l4.500 5L15 1" fill="none" stroke="#fff" stroke-width="1.400"/></svg><b>Changes saved</b><button aria-label="Dismiss"><svg width="9" height="9"><use href="#x"/></svg></button></div>
  </section>

  <nav class="dock">
    <a href="#" aria-label="Files"><svg width="36" height="38" viewBox="0 0 36 38"><rect x="1" y="1" width="34" height="36" rx="3" fill="url(#gMetal)"/><path d="M3 7h30v9H3z" fill="#3a1d0c"/><path d="M4 9h19l2-1h7v8H4z" fill="#f09a4a"/><path d="M4 11h28v5H4z" fill="#f7c48c"/><path d="M1 15h34v19q0 3-3 3H4q-3 0-3-3z" fill="#a3a2a0"/><path d="M1 15.500h34" stroke="#ddd"/><rect x="13" y="23" width="10" height="7" rx="2" fill="#8f8e8c" stroke="#eee"/><path d="M15 26.500h6" stroke="#eee" stroke-width="2"/></svg></a>
    <a href="#" aria-label="Writer"><svg width="34" height="40" viewBox="0 0 34 40"><path d="M24 1h9v9z" fill="#0a69b0"/><path d="M1.500 1.500H22L32.500 11v27.500h-31z" fill="#fff" stroke="#0a6ab2" stroke-width="2"/><path d="M16 15h12v9H16z" fill="#7db7e0"/><path d="M16 24l4-5 3 3 2-2 3 4z" fill="#333"/><path d="M6 16h8M6 19h8M6 22h8M6 27h21M6 30h21M6 33h14" stroke="#0b4f8c" stroke-width="1.300"/></svg></a>
    <a href="#" class="act" aria-label="Firefox"><svg width="40" height="40"><use href="#firefox"/></svg></a>
    <a href="#" aria-label="Calc"><svg width="34" height="40" viewBox="0 0 34 40"><path d="M24 1h9v9z" fill="#15a015"/><path d="M1.500 1.500H22L32.500 11v27.500h-31z" fill="#fff" stroke="#139b13" stroke-width="2"/><path d="M7 15h18v17H7z" fill="#c7e8bb"/><path d="M7 15h18v17H7zM7 19h18M7 23h18M7 27h18M13 15v17M19 15v17" fill="none" stroke="#49a23e"/><path d="M18 26h9v8h-9z" fill="#fff"/><path d="M19.500 34v-4M22.500 34v-7M25.500 34v-5" stroke="#e2582e" stroke-width="2.200"/></svg></a>
    <a href="#" aria-label="Impress"><svg width="34" height="40" viewBox="0 0 34 40"><path d="M24 1h9v9z" fill="#a8400c"/><path d="M1.500 1.500H22L32.500 11v27.500h-31z" fill="#fff" stroke="#a3400f" stroke-width="2"/><path d="M7 17h20v12H7z" fill="#f9ece6" stroke="#b34a19"/><path d="M8 19.500h18" stroke="#e8895c" stroke-width="2"/><path d="M9 23h7M9 26h7" stroke="#b33"/><path d="M18 23h6v4h-6z" fill="#9ccf9c"/><path d="M17 29v2l-5 3M17 31l5 3" fill="none" stroke="#666"/></svg></a>
    <a href="#" aria-label="Software"><svg width="36" height="38" viewBox="0 0 36 38"><path d="M10 9V5q0-3 3-3h10q3 0 3 3v4" fill="none" stroke="#c9491b" stroke-width="3"/><path d="M1 6h34v28q0 2-2 2H3q-2 0-2-2z" fill="#ea6b35"/><path d="M1 6h34v3H1z" fill="#f4935f"/><path d="M11 30l7-16 7 16M9 25h18" fill="none" stroke="#fff" stroke-width="3.500"/></svg></a>
    <a href="#" aria-label="Settings"><svg width="38" height="38" viewBox="0 0 38 38"><circle cx="19" cy="20" r="10.500" fill="none" stroke="#e6e4e2" stroke-width="10"/><circle cx="19" cy="20" r="16.500" fill="none" stroke="#e6e4e2" stroke-width="3" stroke-dasharray="6 4.300"/><path d="M4 33L22 14" stroke="#cf2b2b" stroke-width="6" stroke-linecap="round"/><path d="M21 15l6-6q-1-6 5-8l0 6 4 2 2-2q0 8-9 8l-5 4z" fill="#efefef" stroke="#999" stroke-width=".7"/></svg></a>
    <a href="#" aria-label="GIMP"><svg width="40" height="34" viewBox="0 0 40 34"><path d="M6 12Q14 8 24 8l8-7q3 12-1 18-6 8-14 5Q8 21 6 12z" fill="#7b7263"/><circle cx="5" cy="12" r="4.500" fill="#111"/><circle cx="17" cy="11" r="5.500" fill="#eee"/><circle cx="18" cy="11" r="2.300" fill="#222"/><circle cx="10" cy="10" r="3" fill="#ddd"/><circle cx="10" cy="10" r="1.300" fill="#222"/><path d="M22 17l12 8" stroke="#e08a2c" stroke-width="2.500"/><path d="M32 23l8 9q-7 0-9-6z" fill="#111"/></svg></a>
    <a href="#" aria-label="Eclipse"><svg width="38" height="38" viewBox="0 0 38 38"><circle cx="19" cy="19" r="18" fill="url(#gEcl)" stroke="#b9abd0" stroke-width="1.500"/><path d="M1 16h36M1 19.500h36M1 23h36" stroke="#d9cdec" stroke-width="1.500"/></svg></a>
    <a href="#" aria-label="Monitor"><svg width="38" height="38" viewBox="0 0 38 38"><rect x="1" y="1" width="36" height="36" rx="4" fill="#2196f3" stroke="#1873c8"/><rect x="4" y="4" width="30" height="30" fill="none" stroke="#fff" stroke-width="2"/><path d="M4 21h6l3-9 5 14 4-12 4 13 3-7h5" fill="none" stroke="#fff" stroke-width="2.500"/></svg></a>
    <a href="#" aria-label="System monitor"><svg width="38" height="32" viewBox="0 0 38 32"><rect width="38" height="32" rx="2" fill="#aeb2ae"/><rect x="3" y="3" width="32" height="26" fill="#17201f"/><path d="M3 9h32M3 14h32M3 19h32M3 24h32M9 3v26M15 3v26M21 3v26M27 3v26" stroke="#31413e" stroke-width=".6"/><path d="M4 17h6l2 3 3-10 3 12 2-5 2 1 2-1h10" fill="none" stroke="#6fe0c0" stroke-width="1.300"/></svg></a>
    <a href="#" class="run1" aria-label="Viber"><svg width="38" height="40" viewBox="0 0 38 40"><path d="M11 1h16q10 0 10 10v11q0 10-10 10h-7l-8 7v-7Q1 31 1 22V11Q1 1 11 1z" fill="#fff"/><path d="M11 4h16q7 0 7 7v11q0 7-7 7h-8l-5 5v-5h-3q-7 0-7-7V11q0-7 7-7z" fill="#7d51a0"/><path d="M11 9c2-2 4 1 5 3s-2 2-1 4 3 4 5 5 2-2 4-1 5 3 3 5c-4 4-9 0-12-3s-8-9-4-13z" fill="#fff"/><path d="M20 8q8 1 8 9M20 11q5 1 5 6M20 14q2 0 2 3" fill="none" stroke="#fff" stroke-width="1.500"/></svg></a>
    <a href="#" class="run2" aria-label="TeamViewer"><svg width="40" height="40"><use href="#tv"/></svg></a>
    <button class="apps" aria-label="Show applications"><svg width="26" height="26" viewBox="0 0 26 26" fill="#fff"><circle cx="3" cy="3" r="2.800"/><circle cx="13" cy="3" r="2.800"/><circle cx="23" cy="3" r="2.800"/><circle cx="3" cy="13" r="2.800"/><circle cx="13" cy="13" r="2.800"/><circle cx="23" cy="13" r="2.800"/><circle cx="3" cy="23" r="2.800"/><circle cx="13" cy="23" r="2.800"/><circle cx="23" cy="23" r="2.800"/></svg></button>
  </nav>

  <header class="topbar">
    <div><b>Activities</b><span class="app"><svg width="13" height="13"><use href="#firefox"/></svg><b>Firefox Web Browser</b><svg width="8" height="8"><use href="#tri"/></svg></span></div>
    <time><b>чет 09:00</b> ●</time>
    <div class="tray"><b>▼ 8,170.40 $</b><svg class="t1" width="15" height="15"><use href="#tv"/></svg><svg class="t2" width="5" height="5" viewBox="0 0 5 5"><path d="M0 5l4-4" stroke="#dcd" stroke-width="2"/></svg><b class="t3">en</b><svg class="t4" width="8" height="8"><use href="#tri"/></svg>
      <svg class="t5" width="13" height="12" viewBox="0 0 13 12" fill="none" stroke="#dfdbd2" stroke-width="1.500"><path d="M1 4.500q5.500-5 11 0M3 7q3.500-3 7 0"/><circle cx="6.500" cy="9.500" r="1.300" fill="#dfdbd2"/></svg>
      <svg class="t6" width="15" height="13" viewBox="0 0 15 13"><path d="M0 4h3l4-4v12L3 8.500H0z" fill="#dfdbd2"/><path d="M9 3q2 3 0 6M11 1q3 5 0 9" fill="none" stroke="#8a8780"/><path d="M10 8l4 4M14 8l-4 4" stroke="#dfdbd2" stroke-width="1.500"/></svg>
      <svg class="t6" width="11" height="14" viewBox="0 0 11 14"><path d="M1 2h3V.8h3V2h3v11H1z" fill="none" stroke="#dfdbd2" stroke-width="1.400"/><path d="M3 5h5M3 7.500h5M3 10h5" stroke="#dfdbd2" stroke-width="1.400"/></svg>
      <svg class="t6" width="8" height="8"><use href="#tri"/></svg></div>
  </header>
</div>
</body>
</html>
```
FILE: styles.css
```css
*{box-sizing:border-box}
html,body{height:100%;margin:0}
body{font:11px "Liberation Sans",Arial,sans-serif;color:#333;overflow:hidden}
a{color:inherit;text-decoration:none}
button{font:inherit;color:inherit;border:0;background:none;padding:0;margin:0;display:flex;align-items:center;justify-content:center}
input{font:inherit;color:inherit;border:0;background:none;padding:0;margin:0;outline:0;min-width:0}
h1,h2,h3,h4,p,dl,dd,ul{margin:0;padding:0;font-weight:400}
svg{display:block;flex:none}
i{font-style:normal}
.defs{position:absolute;width:0;height:0}
.desktop{position:relative;height:100vh;overflow:hidden;background:linear-gradient(100deg,#842c58 0,#8f3157 7%,#c03b33 24%,#e64114 46%,#e94b19 70%,#ea5820 88%,#e64416 100%)}

.topbar{position:absolute;inset:0 0 auto 0;height:22px;background:linear-gradient(#59574f,#403f3a);color:#dfdbd2;font:11px/22px "Open Sans",sans-serif;display:grid;grid-template-columns:1fr auto 1fr;z-index:9}
.topbar b{font-weight:700}
.topbar div,.app{display:flex;align-items:center}
.topbar>div:first-child{padding-left:10px;gap:18px}
.app{gap:5px}
.app b{margin-right:3px}
.topbar .tray{justify-content:flex-end;padding-right:13px}
.t1{margin-left:20px}.t2{margin-left:27px}.t3{margin-left:24px}.t4{margin-left:8px}.t5{margin-left:27px}.t6{margin-left:11px}

.dock{position:absolute;inset:22px auto 0 0;width:56px;background:rgba(64,60,57,.83);z-index:8;display:grid;grid-template-rows:repeat(13,29fr) 100fr}
.dock a,.dock button{position:relative;display:grid;place-items:center}
.dock .apps{place-content:end center;padding-bottom:13px}
.dock .act{background:rgba(255,255,255,.1);border-radius:3px;margin-left:2px;width:52px}
.dock .act::before,.dock .run1::before,.dock .run2::before{content:"";position:absolute;left:2px;width:4px;height:4px;border-radius:2px;background:#e95420}
.dock .act::before{left:0;top:14px;box-shadow:0 7px #e95420,0 14px #e95420,0 21px #e95420}
.dock .run2::before{top:20px;box-shadow:0 7px #e95420}

.pin{position:absolute;width:38px}
.folder1{left:92px;top:46px}.folder2{left:189px;top:36px}
.file1{left:1363px;top:39px}.file2{left:1461px;top:51px}.file3{left:1510px;top:127px}.file4{left:1510px;top:414px}
.bits{position:absolute;left:4px;top:3px;font:6px/8px "DejaVu Sans",sans-serif;color:#555}
.lbl{display:block;font:12px/20px "Open Sans",sans-serif;color:#fff;text-shadow:1px 1px 1px #500;white-space:nowrap}
.file3 .lbl{margin-left:-5px}

.teamwin{position:absolute;left:1400px;right:14px;top:473px;height:408px;background:#fff;border-radius:6px 6px 0 0;box-shadow:0 0 6px #7a0d00;overflow:hidden}
.teamwin header{height:26px;background:#e2dbd5;display:flex;align-items:center;justify-content:flex-end;gap:3px;padding-right:5px;font:bold 12px "Open Sans",sans-serif;color:#a39b92}
.teamwin header i{width:14px;height:14px;border:1px solid #bdb5ac;border-radius:50%;display:grid;place-items:center;color:#777}
.team-hero{background:#0366d0;height:79px;padding:11px 26px 0 0;display:flex;justify-content:flex-end}
.team-shot{width:130px;height:94px;background:#fff;border-right:3px solid #cfd6e4;border-bottom:3px solid #bbb;font:6px/9px "Open Sans",sans-serif;color:#555;padding-left:78px}
.ts-title{display:flex;justify-content:space-between;height:10px;color:#222;white-space:nowrap;margin-left:-6px}
.ts-title b{background:#c83a43;color:#fff;width:9px;flex:none;text-align:center;line-height:6px;height:7px}
.ts-bar{background:#0754a9;color:#fff;height:10px}
.ts-find{background:#0a6ad6;height:20px;display:flex;justify-content:flex-end;padding:5px 3px}
.ts-find span{background:#fff;width:34px}
.ts-sel{background:#11a0f8;margin-top:11px;height:8px}
.team-copy{padding-left:110px;margin-top:46px;font-size:12px;line-height:16px;color:#222}
.team-copy p{margin-bottom:12px}
.team-copy .now{font-size:13px;color:#0f66c4;margin-bottom:6px}
.team-copy .q{margin-top:44px}

.backwin{position:absolute;left:-20px;right:192px;top:79px;bottom:0;background:#f0f4f9;overflow:hidden;display:flex;flex-direction:column;box-shadow:0 0 8px rgba(0,0,0,.6);border-right:4px solid #ecebea}
.bw-title{height:25px;background:linear-gradient(#f4f1ed,#e0dad3)}
.bw-tabs{height:28px;background:#f0eeeb;display:flex;align-items:center;gap:8px;color:#444}
.bw-tab{width:90px;align-self:stretch;border-top:2px solid #f0703c;border-right:1px solid #aaa;background:#f5f4f2;display:flex;align-items:center;justify-content:space-between;padding:0 8px 0 20px;font:12px "Open Sans",sans-serif}
.bw-url{height:27px;margin-top:2px;background:#fff;border:1px solid #ccc;display:flex;align-items:center;gap:6px;padding-left:60px;color:#999;font:12px "Noto Sans",sans-serif}
.bw-url span{margin-left:3px}
.bw-marks{height:24px;background:#f5f4f2;border-bottom:1px solid #ccc;display:flex;align-items:center;gap:9px;padding-left:29px;white-space:nowrap;font:12px "Noto Sans",sans-serif;color:#555}
.bw-head{height:43px;background:#0572ce;color:#fff;font-size:18px;line-height:43px;padding-left:14px}
.bw-body{flex:1;display:grid;grid-template-columns:85px 1fr;min-height:0}
.bw-side{background:#003a70;border-right:1px solid #00154a;padding-top:74px;color:#c5d0dc}
.bw-side a{display:block;height:36px;line-height:36px;padding-left:20px}
.bw-side .on{background:#045aa6}
.bw-side .ch{display:flex;align-items:center;padding-left:64px}
.bw-main{min-width:0;padding-right:17px;background:#f0f4f9}
.bw-crumb{margin-right:-17px;background:#fff;height:67px;border-bottom:1px solid #dfe3e8;padding:14px 0 0 15px;display:flex;flex-direction:column;align-items:flex-start;gap:10px;line-height:16px;color:#666}
.bw-crumb a{color:#0572ce;font-size:12px;height:27px;border-bottom:2px solid #0b50b0}
.bw-strip{height:13px;background:#fff;margin-left:15px;border:1px solid #e4e6ea;border-top:0}
.ig{margin:14px 0 0 15px;background:#fff;border:1px solid #e0e3e6}
.ig h2{font-size:15px;line-height:44px;height:45px;padding-left:11px;border-bottom:1px solid #e4e4e4}
.ig-tools{height:44px;background:#fafafa;padding:7px;border-bottom:1px solid #e4e4e4}
.ig-find{width:60px;height:29px;border:1px solid #ddd;border-radius:2px;background:#f8f8f8;gap:2px;color:#555;justify-content:flex-start;padding-left:9px}
.ig table{width:100%;border-collapse:collapse;table-layout:fixed}
.ig td,.ig th{height:29px;border-right:1px solid #e4e4e4;border-bottom:1px solid #ececec;padding:0 8px 0 7px;font-weight:400;text-align:left;white-space:nowrap}
.ig th{height:37px;background:#f3f3f3;border-bottom:2px solid #bbb}
.ig td:first-child,.ig th:first-child{width:29px;padding:0 7px}
.ig td:nth-child(2),.ig th:nth-child(2){width:38px;padding:0 0 0 13px}
.ig td:nth-child(3){border-right:2px solid #d8d8d8}
.ig .c3{width:215px}.ig .c4{width:325px}.ig .c5{width:228px}.ig .c6{width:239px}
.ig .n{text-align:right;color:#0572ce}
.ig .sel td{background:#e8f0fc}
.ig input{appearance:none;display:block;width:15px;height:15px;border:1px solid #ddd;border-radius:2px;background:#fff}
.ig input:checked{border-color:#bbb}
.ig input:checked::after{content:"";display:block;width:7px;height:4px;margin:3px 0 0 3px;border-left:1px solid #555;border-bottom:1px solid #555;transform:rotate(-45deg)}
.ig-foot{height:32px;line-height:31px;padding-left:12px;color:#666;border-bottom:1px solid #e4e4e4}
.ig-bar{height:4px;margin-top:6px;background:#f4936b}
.ig.second{margin-top:15px}

.mainwin{position:absolute;left:133px;right:89px;top:54px;bottom:89px;border-radius:6px 6px 0 0;background:#fff;box-shadow:0 2px 12px rgba(0,0,0,.6);display:flex;flex-direction:column;overflow:hidden;z-index:5}
.titlebar{height:25px;flex:none;background:linear-gradient(#f8f6f4,#ded7cf);display:flex;align-items:center;justify-content:center;position:relative;font:12px "Open Sans",sans-serif}
.titlebar h1{font-size:12px;font-weight:700;color:#4e463e}
.wbtns{position:absolute;right:4px;top:5px;display:flex;gap:2px;color:#7b746c}
.wbtns button{width:15px;height:15px;border:1px solid #bdb4aa;border-radius:50%}
.wbtns .close{background:#f07342;border-color:#c96b49;color:#6b2b10}
.tabbar{height:28px;flex:none;background:#f0edea;border-bottom:1px solid #b8b4b0;display:flex;font:12px "Noto Sans",sans-serif;color:#555}
.tscroll{width:23px;color:#444}
.tabs{flex:1;display:flex;min-width:0;overflow:hidden;box-shadow:inset 8px 0 6px -6px #888}
.tabs a{flex:0 0 calc(100% / 20.25);display:flex;align-items:center;gap:5px;padding:0 4px 0 7px;position:relative;border-left:1px solid transparent}
.tabs a:first-child{margin-left:-13px}
.tabs a::before{content:"";position:absolute;left:-1px;top:4px;bottom:4px;border-left:1px solid #bdb9b5}
.tabs svg{width:13px;height:13px}
.tabs span{flex:1;min-width:0;white-space:nowrap;mask-image:linear-gradient(90deg,#000 45%,transparent 90%)}
.tabs .on{background:#f6f5f4;border:1px solid #b8b4b0;border-top:2px solid #f0763f;border-bottom:0;margin-bottom:-1px;padding-right:8px}
.tabs .on::before,.tabs .on+a::before{display:none}
.tabs .cx{width:11px;height:11px;color:#333}
.tabs .on span{opacity:.7;mask-image:linear-gradient(90deg,#000 30%,transparent)}
.tabs .bl{color:#1c74c4}.tabs .gr{color:#a3a6a9}
.fb{width:13px;height:13px;flex:none;background:#f5e615;color:#223;font:bold 11px/13px "DejaVu Sans",sans-serif;text-align:center}
.tabend{width:78px;display:flex;color:#444;padding-right:2px}
.tabend button{flex:1}
.tabend .dim{color:#aaa}
.navbar{height:33px;flex:none;background:#f5f4f2;display:flex;align-items:center;padding-bottom:1px}
.navbar>button{width:27px}
.navbar .back{width:28px;height:28px;margin:0 0 0 2px;border:1px solid #bbb;border-radius:50%;background:#fafafa}
.urlbox{height:26px;flex:1;margin-left:28px;border:1px solid #c4c1be;border-radius:3px;background:#fff;display:flex;align-items:center;padding:0 1px 0 6px;gap:4px;box-shadow:0 1px 2px #ddd}
.urlbox .ub{width:20px}
.url{flex:1;margin-left:2px;font:12px "Noto Sans",sans-serif;color:#999;white-space:nowrap}
.url b{font-weight:400;color:#222}
.urlbox .zoom{width:41px;height:14px;border-radius:7px;background:#f0efee;font:10px "Noto Sans",sans-serif;color:#333;margin-right:5px}
.urlbox .dots{border-left:1px solid #ccc;height:19px;width:29px;padding-left:5px}
.searchbox{width:240px;height:26px;margin-left:8px;border:1px solid #c4c1be;border-radius:3px;background:#fff;display:flex;align-items:center;gap:6px;padding:0 7px;color:#888;font:12px "Noto Sans",sans-serif;box-shadow:0 1px 2px #ddd}
.searchbox input{flex:1}
::placeholder{color:#999;opacity:1}
.nright{display:flex;margin-left:27px;width:115px;align-items:center}
.nright button{width:27px}
.nright .se{width:13px;height:13px;margin:0 9px 0 6px;background:#333;color:#fff;font:bold 8px "Open Sans",sans-serif;align-items:flex-end}
.nright .menu{border-left:1px solid #ddd;height:26px;width:33px}
.marks{height:20px;flex:none;background:#f5f4f2;border-bottom:1px solid #c9c7c5;display:flex;padding-left:10px;font:12px "Noto Sans",sans-serif;color:#444}
.marks a{display:flex;align-items:center;gap:4px;padding-bottom:2px}
.marks .m2{margin-left:12px}
.marks .m3{margin-left:11px;gap:8px}

.apex{flex:1;display:flex;flex-direction:column;min-height:0}
.ahead{height:37px;flex:none;background:#f8f8f8;display:flex;color:#666}
.ahead>*{border-right:1px solid #e2e2e2;border-bottom:1px solid #e2e2e2}
.brand{width:215px;display:flex;align-items:center;font-size:12px;color:#333;white-space:nowrap;padding:2px 0 0 10px}
.ora{width:89px;font:20px "DejaVu Sans",sans-serif;color:#f80000}
.at{display:flex;align-items:center;gap:6px;padding:0 9px 0 10px;white-space:nowrap}
.at.on{background:#fff;color:#444;border-top:2px solid #1b8fe3;border-bottom-color:#fff;padding-bottom:2px;padding-left:11px}
.at i{width:20px;height:20px;border:1px solid #e0e0e0;border-radius:50%;display:grid;place-items:center;color:#999}
.fill{flex:1}
.asearch{width:231px;background:#fff;display:flex;align-items:center;gap:3px;padding-left:9px;font-size:12px}
.asearch input{width:170px}
.ahead ::placeholder{color:#777}
.acct{display:flex;align-items:center;justify-content:center;gap:3px}
.a1{width:51px}.a2{width:97px}
.acct.a2{border-right:0;gap:6px}
.abar{height:44px;flex:none;border-bottom:1px solid #dcdcdc;display:flex;align-items:center;padding:0 8px 3px 9px;color:#555}
.abar b{color:#555}
.up{width:20px;height:20px;border:1px solid #5aa7e8;border-radius:50%;display:grid;place-items:center;margin-right:4px}
.crumbs{color:#444}
.slash{color:#ccc;margin:0 6px}
.pagebox{margin-left:auto;height:30px;border:1px solid #ddd;border-radius:2px;display:flex;align-items:stretch;width:136px}
.pagebox button{width:38px;gap:3px}
.pagebox input{width:40px;text-align:right;padding-right:6px;font-size:12px;flex:1}
.spin{width:22px;border-left:1px solid #eee;display:flex;flex-direction:column;align-items:center;justify-content:center;gap:3px;color:#777}
.pagebox .go{width:35px;background:#f8f8f8;border-left:1px solid #ddd}
.tg{height:30px;display:flex;align-items:center;justify-content:space-around;border-left:1px solid #e6e6e6}
.tg button{gap:3px}
.g1{width:46px;margin-left:7px;padding-right:4px}.g2{width:78px;padding:0 6px}.g3{width:156px;padding:0 16px 0 11px}.g4{width:131px;padding:0 10px 0 8px}
.g3{border-color:#ddd}
.tg.dim{color:#aaa}
.save{width:65px;height:30px;margin-left:6px;border:1px solid #ddd;background:#f8f8f8;border-radius:2px}
.tg.g4{border-right:1px solid #e6e6e6}
.run{width:65px;height:30px;margin-left:4px;background:#2d7bbb;border-radius:2px}

.panes{flex:1;min-height:0;display:grid;grid-template-columns:270px 8px minmax(0,1fr) 7px 408px}
.panes>*{display:flex;flex-direction:column;min-height:0;min-width:0}
.ptabs{height:32px;flex:none;display:flex;color:#444}
.ptabs>*{flex:1;background:#f2f2f2;border-right:1px solid #dedede;border-bottom:1px solid #dedede;gap:5px}
.ptabs .on{background:#fff;border-bottom-color:#fff}
.ptabs>:last-child{border-right:0}
.ptabs.lt .on{flex:0 0 66px}
.ptabs.rt .on{flex:0 0 204px}
.ptools{height:41px;flex:none;display:flex;align-items:center;border-bottom:1px solid #e0e0e0;color:#666;padding:0 8px}
.lt2{padding-left:7px}
.sq{width:32px;height:29px}
.sq.on{background:#ececec;border:1px solid #d0d0d0;border-radius:2px}
.lm{margin-left:auto;gap:3px;margin-right:8px}
.gut{background:#e8e8e8;padding-top:281px}
.treewrap{flex:1;position:relative;min-height:0}
.tree{list-style:none;height:480px;margin-top:2px;display:grid;grid-template-columns:minmax(0,1fr);grid-template-rows:repeat(22,1fr)}
.tree li{display:flex;align-items:center;white-space:nowrap;margin-right:4px;min-height:0;color:#333}
.tree svg{width:14px;height:13px;margin-right:4px;color:#999;overflow:visible}
.tree svg:first-child{width:8px;height:8px;margin-right:7px}
.tree .l1{padding-left:16px}.tree .l2{padding-left:34px}.tree .l3{padding-left:52px}.tree .l4{padding-left:70px}
.tree .g{color:#777}
.i{font-style:italic}
.tree .cur{background:#2d7bbb;color:#fff}
.tree .cur svg{color:#fff}
.tree .cur svg:first-child{color:#a5c8e4}
.vbar{position:absolute;right:0;top:56px;width:4px;height:348px;background:#f4936b}
.hbar{position:absolute;left:15px;right:8px;bottom:0;height:4px;background:#f4936b}
.ctx{position:absolute;left:53px;top:252px;width:150px;background:#fff;border:1px solid #ccc;box-shadow:1px 2px 3px rgba(0,0,0,.3);padding:6px 0 8px}
.ctx button{width:100%;height:29px;justify-content:flex-start;padding-left:29px}
.ctx .on{background:#2d7bbb;color:#fff}
.ctx hr{border:0;border-top:1px solid #e0e0e0;margin:1px 0 2px}
.mt{justify-content:space-between;padding:0 15px 0 17px}
.mt a{display:flex;align-items:center;gap:2px;color:#444}
.cards{flex:1;min-height:0;overflow:hidden;background:#dadada;display:grid;grid-template-columns:262fr 195fr 195fr 2px;column-gap:8px;padding:8px 0 0 7px;align-items:start}
.card{background:#fff;border-radius:2px;box-shadow:0 1px 1px #c5c5c5;min-width:0}
.card.r,.card.s{min-height:500px}
.card h2{font-size:15px;line-height:38px;height:40px;padding-left:11px;color:#222}
.card h3{height:30px;font-size:11px;background:#f3f3f3;border-top:1px solid #e2e2e2;border-bottom:1px solid #e2e2e2;padding:0 9px 0 11px;display:flex;align-items:center;justify-content:space-between;color:#444}
.card h3+h3{border-top-color:#eee}
.card h3 svg{width:11px;height:11px;color:#999}
.card a{color:#1c74c4}
dl{display:grid;grid-template-columns:76px 1fr;column-gap:8px;padding:7px 0 8px;font-size:9px;line-height:20px}
dt{text-align:right;color:#777}
.grp{padding:0 9px 8px 12px;border-bottom:1px solid #ddd}
.grp.last{border:0;padding-bottom:6px}
.grp h4{font-size:10px;line-height:29px;margin-left:-1px}
.ln{display:grid;grid-template-columns:17px 18px 109px 1fr;font-size:9px;line-height:12px;padding:5px 0;color:#777}
.r .ln{align-items:start}
.nw{white-space:nowrap}
.ln svg{width:14px;height:12px;overflow:visible}
.ln em{align-self:stretch}
.sub em{border-left:1px dotted #aaa;margin:-3px 0 -3px 7px}
.sub a:nth-of-type(1){display:flex;gap:4px;margin-left:-3px}
.p .grp{padding:0 8px 9px 11px}
.p .ln{grid-template-columns:17px 19px 76px minmax(0,1fr);padding:4px 0 5px}
.p .ln span:last-child{white-space:nowrap}
.p .ln a{width:76px}
.p .ln svg{color:#aaa}
.p .ln.one>span:first-child{text-align:right;padding-right:7px}
.sl{padding:0 7px}
.sl.big{padding:7px 7px 9px}
.sl a{display:flex;align-items:center;gap:4px;height:22px;font-size:9px;padding-bottom:1px}
.sl svg{width:14px;height:14px}
.track{align-self:stretch;background:#fff;margin:-8px 0 0 -3px}
.track span{display:block;height:157px;background:#f4936b}
.rtools{color:#999}
.dv{width:1px;height:29px;background:#eee;margin:0 6px 0 8px}
.go2{margin-left:auto;gap:3px;margin-right:9px}
.empty{flex:1;display:flex;flex-direction:column;align-items:center;justify-content:center;gap:3px}
.toast{position:absolute;right:8px;top:114px;width:326px;height:43px;background:rgba(78,173,47,.93);border-radius:2px;display:flex;align-items:center;gap:10px;padding:0 16px 2px 10px;color:#fff;font-size:12px;box-shadow:0 1px 3px rgba(0,0,0,.3)}
.toast button{margin-left:auto}
```
